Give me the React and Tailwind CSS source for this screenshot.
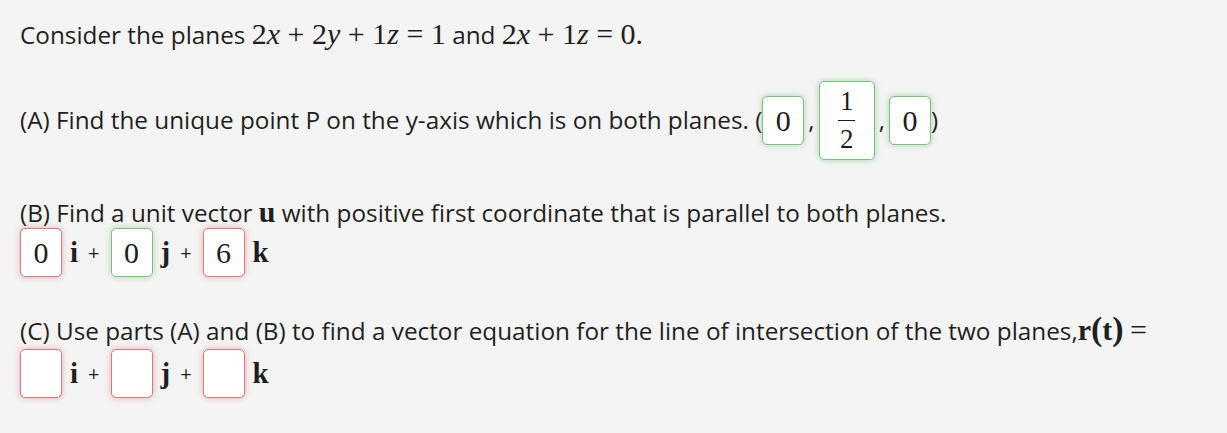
import React from "react";

const mathFont = "font-['Liberation_Serif','DejaVu_Serif',serif]";

function Ans({ value, state = "red", tall = false, children }) {
    const border =
        state === "green"
            ? "border-[#7cbf7f] shadow-[0_0_6px_rgba(95,170,95,0.45)]"
            : "border-[#d9787c] shadow-[0_0_6px_rgba(210,90,95,0.45)]";
    return (
        <div
            className={`flex shrink-0 items-center justify-center rounded-[5px] border bg-white ${border} ${
                tall ? "h-[79px] w-[56px]" : "h-[49px] w-[42px]"
            } ${mathFont} text-[30px] text-[#1d1d1d]`}
        >
            {children ?? value}
        </div>
    );
}

function Frac({ n, d }) {
    return (
        <div className="flex flex-col items-center leading-none">
            <span className="text-[27px]">{n}</span>
            <span className="my-[5px] h-px w-[17px] bg-[#1d1d1d]"></span>
            <span className="text-[27px]">{d}</span>
        </div>
    );
}

function M({ children, className = "" }) {
    return <span className={`${mathFont} text-[30px] ${className}`}>{children}</span>;
}

function Unit({ u }) {
    return <span className={`${mathFont} pl-[8px] pr-[10px] text-[29px] font-bold`}>{u}</span>;
}

function Plus() {
    return <span className="pr-[11px] text-[20px]">+</span>;
}

export default function App() {
    return (
        <div className="min-h-screen bg-[#f4f4f4] px-5 text-[24.3px] text-[#1f1f1f] font-['Open_Sans','Noto_Sans',sans-serif]">
            <div className="pt-[16px] leading-[36px]">
                Consider the planes{" "}
                <M>
                    2<i>x</i> + 2<i>y</i> + 1<i>z</i> = 1
                </M>{" "}
                and{" "}
                <M>
                    2<i>x</i> + 1<i>z</i> = 0.
                </M>
            </div>

            <div className="mt-[28px] flex items-center">
                <span className="whitespace-nowrap">
                    (A) Find the unique point P on the y-axis which is on both planes. (
                </span>
                <Ans value="0" state="green" />
                <span className="px-[4px]">,</span>
                <Ans state="green" tall>
                    <Frac n="1" d="2" />
                </Ans>
                <span className="px-[4px]">,</span>
                <Ans value="0" state="green" />
                <span>)</span>
            </div>

            <div className="mt-[34px] leading-[36px]">
                (B) Find a unit vector <span className={`${mathFont} text-[30px] font-bold`}>u</span> with positive
                first coordinate that is parallel to both planes.
            </div>
            <div className="mt-[-3px] flex items-center">
                <Ans value="0" />
                <Unit u="i" />
                <Plus />
                <Ans value="0" state="green" />
                <Unit u="j" />
                <Plus />
                <Ans value="6" />
                <Unit u="k" />
            </div>

            <div className="mt-[34px] whitespace-nowrap leading-[36px]">
                (C) Use parts (A) and (B) to find a vector equation for the line of intersection of the two planes,
                <M className="font-bold">
                    r<span className="text-[34px]">(</span>t<span className="text-[34px]">)</span>
                </M>{" "}
                <M>=</M>
            </div>
            <div className="flex items-center">
                <Ans />
                <Unit u="i" />
                <Plus />
                <Ans />
                <Unit u="j" />
                <Plus />
                <Ans />
                <Unit u="k" />
            </div>
        </div>
    );
}
